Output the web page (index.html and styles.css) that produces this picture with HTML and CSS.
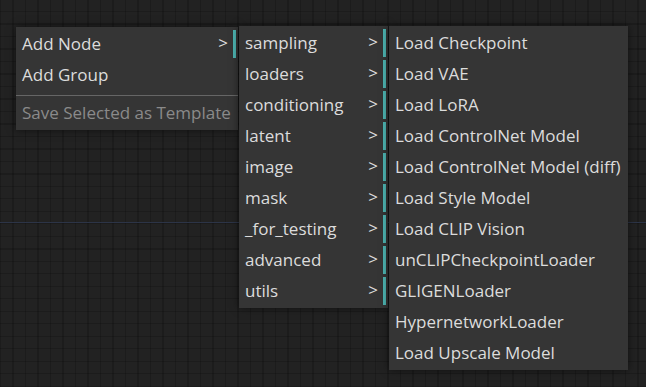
FILE: index.html
```html
<!DOCTYPE html>
<html>
<head>
<meta charset="utf-8">
<link rel="stylesheet" href="styles.css">
</head>
<body>
<div class="canvas">
  <div class="hline"></div>
  <div class="menu menu-main">
    <div class="entry submenu">Add Node</div>
    <div class="entry">Add Group</div>
    <div class="separator"></div>
    <div class="entry disabled">Save Selected as Template</div>
  </div>
  <div class="menu menu-cat">
    <div class="entry submenu">sampling</div>
    <div class="entry submenu">loaders</div>
    <div class="entry submenu">conditioning</div>
    <div class="entry submenu">latent</div>
    <div class="entry submenu">image</div>
    <div class="entry submenu">mask</div>
    <div class="entry submenu">_for_testing</div>
    <div class="entry submenu">advanced</div>
    <div class="entry submenu">utils</div>
  </div>
  <div class="menu menu-nodes">
    <div class="entry">Load Checkpoint</div>
    <div class="entry">Load VAE</div>
    <div class="entry">Load LoRA</div>
    <div class="entry">Load ControlNet Model</div>
    <div class="entry">Load ControlNet Model (diff)</div>
    <div class="entry">Load Style Model</div>
    <div class="entry">Load CLIP Vision</div>
    <div class="entry">unCLIPCheckpointLoader</div>
    <div class="entry">GLIGENLoader</div>
    <div class="entry">HypernetworkLoader</div>
    <div class="entry">Load Upscale Model</div>
  </div>
</div>
</body>
</html>
```
FILE: styles.css
```css
html, body {
  margin: 0;
  padding: 0;
  background: #222;
}
.canvas {
  position: relative;
  width: 646px;
  height: 387px;
  overflow: hidden;
  background-color: #222;
  background-image:
    repeating-linear-gradient(90deg, rgba(0,0,0,0.18) 0 1px, transparent 1px 12.5px),
    repeating-linear-gradient(0deg, rgba(0,0,0,0.18) 0 1px, transparent 1px 12.5px);
  font-family: "Open Sans", "Noto Sans", sans-serif;
}
.hline {
  position: absolute;
  left: 0;
  right: 0;
  top: 222px;
  height: 1px;
  background: #2c3447;
}
.menu {
  position: absolute;
  display: flex;
  flex-direction: column;
  gap: 3px;
  padding: 3px 0;
  background: #353535;
  box-shadow: 0 0 8px rgba(0,0,0,0.55);
  font-size: 17px;
  color: #dcdcdc;
}
.menu-main { left: 16px; top: 27px; width: 222px; }
.menu-cat { left: 239px; top: 26px; width: 149px; }
.menu-nodes { left: 389px; top: 26px; width: 239px; }
.entry {
  position: relative;
  height: 28px;
  line-height: 28px;
  padding-left: 6px;
  margin-right: 2px;
  white-space: nowrap;
}
.entry.submenu {
  border-right: 3px solid #4db3b0;
}
.entry.submenu::after {
  content: ">";
  position: absolute;
  right: 5px;
  top: -1px;
  color: #dcdcdc;
}
.entry.disabled {
  color: #8a8a8a;
}
.separator {
  height: 1px;
  margin-top: 3px;
  background: #666;
}
```
